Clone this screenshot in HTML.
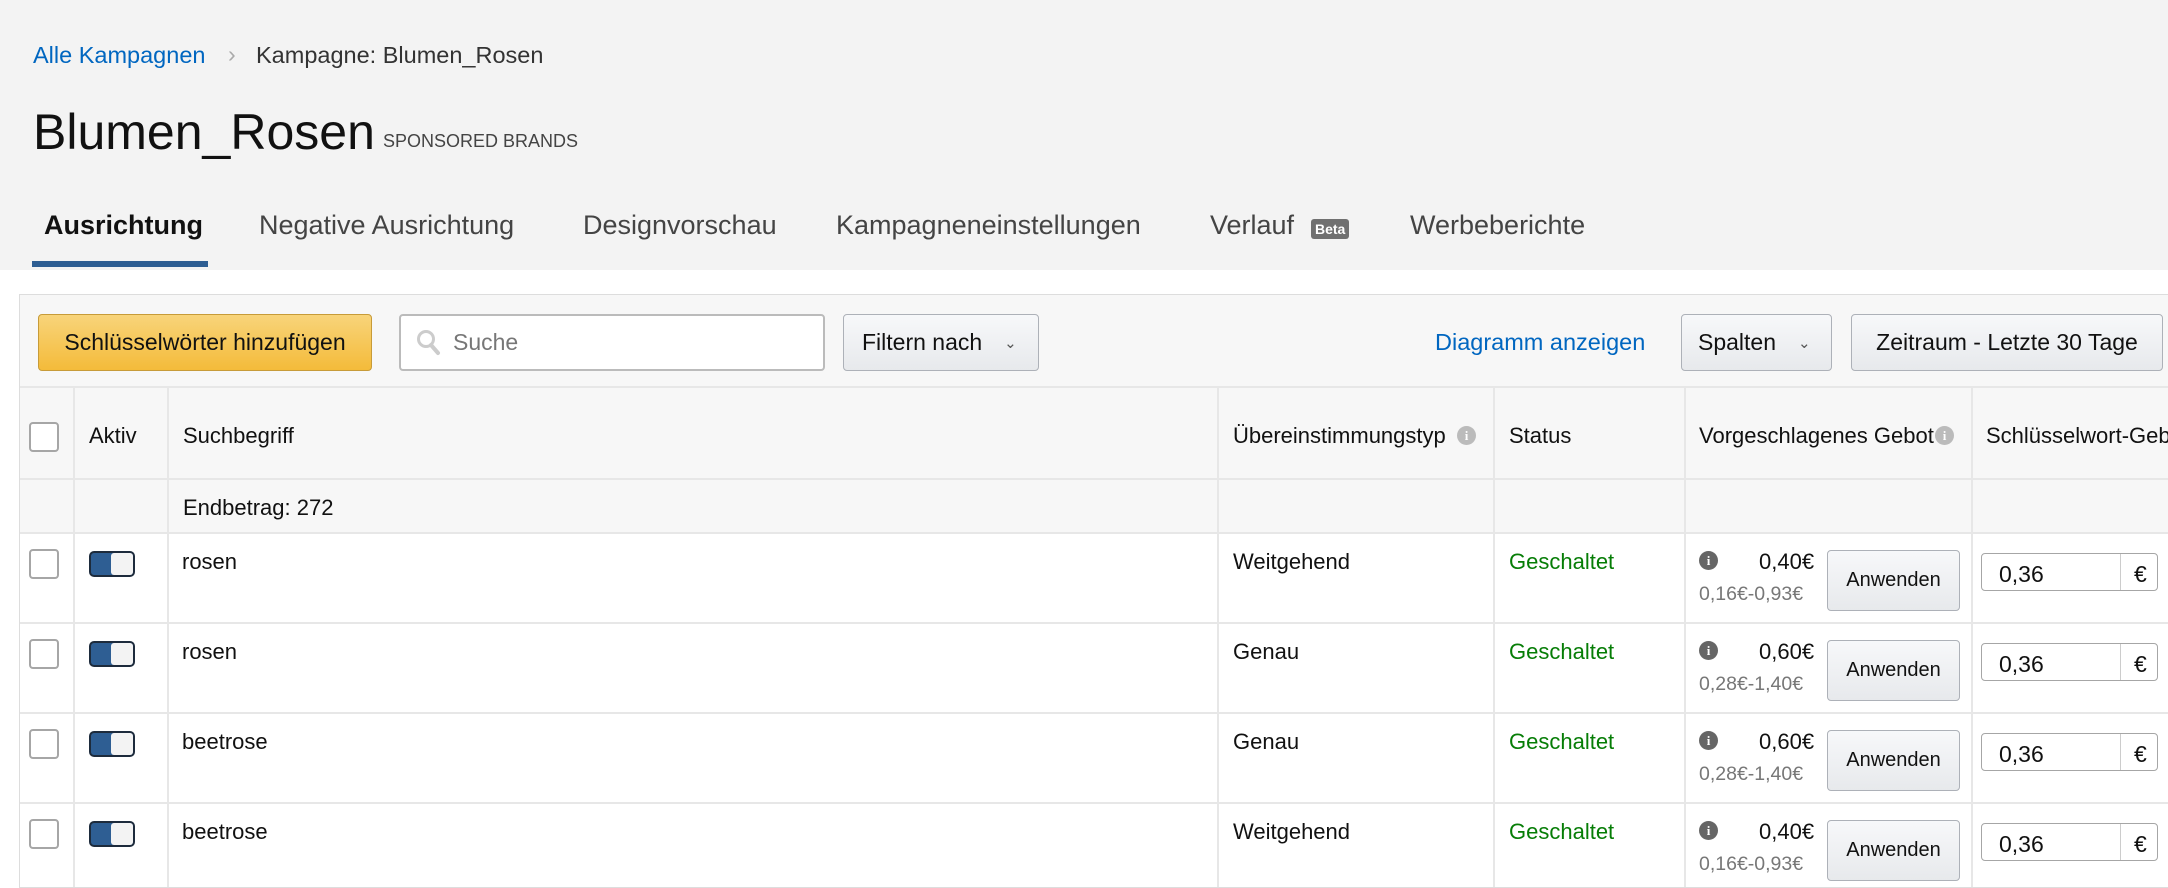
<!DOCTYPE html>
<html style="overflow:hidden;width:2168px;height:888px"><head><meta charset="utf-8"><style>
*{box-sizing:border-box;margin:0;padding:0}
body{width:2168px;height:888px;overflow:hidden;background:#fff;font-family:"Liberation Sans",Arial,sans-serif;color:#111;position:relative}
.top{position:absolute;left:0;top:0;width:2168px;height:270px;background:#f3f3f3}
.a{position:absolute;white-space:nowrap}
.panel{position:absolute;left:19px;top:294px;width:2160px;height:594px;border:1px solid #ddd;background:#fff;overflow:hidden}
.tb{position:absolute;left:0;top:0;width:100%;height:93px;background:#f7f7f7;border-bottom:2px solid #e7e7e7}
.btn{position:absolute;border:1px solid #adb1b8;border-radius:4px;background:linear-gradient(#f7f8fa,#e7e9ec);font-size:23px;display:flex;align-items:center;justify-content:center}
.hdr{position:absolute;left:0;top:93px;width:100%;height:144px;background:#f7f7f7}
.hl{position:absolute;height:2px;background:#e7e7e7;left:0;width:100%}
.vl{position:absolute;width:2px;background:#e7e7e7;top:93px;height:520px}
.cb{position:absolute;width:30px;height:30px;border:2px solid #a6a6a6;border-radius:4px;background:#fff}
.tg{position:absolute;width:46px;height:26px;border:2px solid #1d2b3c;border-radius:5px;background:#2e5e93}
.tg i{position:absolute;right:0;top:0;width:22px;height:22px;background:#f3f3f3;border-radius:3px}
.t{font-size:22px}
.g{color:#067d06}
.info{position:absolute;width:19px;height:19px;border-radius:50%;background:#666;color:#fff;font-size:13px;font-weight:bold;text-align:center;line-height:19px;font-family:"Liberation Serif",serif}
.inp{position:absolute;width:177px;height:38px;border:1px solid #a6a6a6;border-radius:4px;background:#fff;font-size:23px}
.tab{position:absolute;white-space:nowrap;top:210px;font-size:27px;color:#444}
</style></head><body>
<div class="top"></div>
<div class="a" style="left:33px;top:42px;font-size:23.5px;color:#0066c0">Alle Kampagnen</div>
<div class="a" style="left:228px;top:41px;font-size:23px;color:#aaa">›</div>
<div class="a" style="left:256px;top:42px;font-size:23.5px;color:#333">Kampagne: Blumen_Rosen</div>
<div class="a" style="left:33px;top:103px;font-size:50px;color:#111">Blumen_Rosen</div>
<div class="a" style="left:383px;top:131px;font-size:18px;color:#444">SPONSORED BRANDS</div>
<div class="tab" style="left:44px;font-weight:bold;color:#111">Ausrichtung</div>
<div class="a" style="left:32px;top:261px;width:176px;height:6px;background:#2e5e93"></div>
<div class="tab" style="left:259px">Negative Ausrichtung</div>
<div class="tab" style="left:583px">Designvorschau</div>
<div class="tab" style="left:836px">Kampagneneinstellungen</div>
<div class="tab" style="left:1210px">Verlauf</div>
<div class="a" style="left:1311px;top:219px;font-size:14px;font-weight:bold;color:#fff;background:#707070;border-radius:3px;padding:2px 4px">Beta</div>
<div class="tab" style="left:1410px">Werbeberichte</div>

<div class="panel">
<div class="tb"></div>
<div class="btn" style="left:18px;top:19px;width:334px;height:57px;background:linear-gradient(#f8d47a,#f4bb3a);border-color:#c79b39">Schlüsselwörter hinzufügen</div>
<div class="a" style="left:379px;top:19px;width:426px;height:57px;border:2px solid #bbb;border-radius:4px;background:#fff"></div>
<svg class="a" style="left:396px;top:34px" width="26" height="28" viewBox="0 0 26 28"><circle cx="10" cy="10" r="7.5" fill="none" stroke="#ccc" stroke-width="3"/><path d="M15 16 L22 24" stroke="#ccc" stroke-width="4" stroke-linecap="round"/></svg>
<div class="a" style="left:433px;top:34px;font-size:23px;color:#777">Suche</div>
<div class="btn" style="left:823px;top:19px;width:196px;height:57px;justify-content:flex-start;padding-left:18px">Filtern nach<span style="margin-left:22px;font-size:15px;color:#555">&#8964;</span></div>
<div class="a" style="left:1415px;top:34px;font-size:23.5px;color:#0066c0">Diagramm anzeigen</div>
<div class="btn" style="left:1661px;top:19px;width:151px;height:57px;justify-content:flex-start;padding-left:16px">Spalten<span style="margin-left:22px;font-size:15px;color:#555">&#8964;</span></div>
<div class="btn" style="left:1831px;top:19px;width:312px;height:57px">Zeitraum - Letzte 30 Tage</div>

<div class="hdr"></div>
<div class="hl" style="top:183px"></div>
<div class="hl" style="top:237px"></div>
<div class="hl" style="top:327px"></div>
<div class="hl" style="top:417px"></div>
<div class="hl" style="top:507px"></div>
<div class="vl" style="left:53px"></div>
<div class="vl" style="left:147px"></div>
<div class="vl" style="left:1197px"></div>
<div class="vl" style="left:1473px"></div>
<div class="vl" style="left:1664px"></div>
<div class="vl" style="left:1951px"></div>

<div class="cb" style="left:9px;top:127px"></div>
<div class="a t" style="left:69px;top:128px">Aktiv</div>
<div class="a t" style="left:163px;top:128px">Suchbegriff</div>
<div class="a t" style="left:1213px;top:128px">Übereinstimmungstyp</div>
<div class="info" style="left:1437px;top:131px;background:#bbb">i</div>
<div class="a t" style="left:1489px;top:128px">Status</div>
<div class="a t" style="left:1679px;top:128px">Vorgeschlagenes Gebot</div>
<div class="info" style="left:1915px;top:131px;background:#bbb">i</div>
<div class="a t" style="left:1966px;top:128px">Schlüsselwort-Gebot</div>
<div class="a t" style="left:163px;top:200px">Endbetrag: 272</div>

<div class="cb" style="left:9px;top:254px"></div><div class="tg" style="left:69px;top:256px"><i></i></div>
<div class="a t" style="left:162px;top:254px">rosen</div><div class="a t" style="left:1213px;top:254px">Weitgehend</div><div class="a t g" style="left:1489px;top:254px">Geschaltet</div>
<div class="info" style="left:1679px;top:256px">i</div><div class="a t" style="left:1739px;top:254px">0,40€</div><div class="a" style="left:1679px;top:288px;font-size:19.5px;color:#777">0,16€-0,93€</div>
<div class="btn" style="left:1807px;top:255px;width:133px;height:61px;font-size:20px">Anwenden</div>
<div class="inp" style="left:1961px;top:258px"><span style="position:absolute;left:17px;top:7px">0,36</span><span style="position:absolute;left:138px;top:0;width:1px;height:36px;background:#ccc"></span><span style="position:absolute;left:152px;top:7px">€</span></div>

<div class="cb" style="left:9px;top:344px"></div><div class="tg" style="left:69px;top:346px"><i></i></div>
<div class="a t" style="left:162px;top:344px">rosen</div><div class="a t" style="left:1213px;top:344px">Genau</div><div class="a t g" style="left:1489px;top:344px">Geschaltet</div>
<div class="info" style="left:1679px;top:346px">i</div><div class="a t" style="left:1739px;top:344px">0,60€</div><div class="a" style="left:1679px;top:378px;font-size:19.5px;color:#777">0,28€-1,40€</div>
<div class="btn" style="left:1807px;top:345px;width:133px;height:61px;font-size:20px">Anwenden</div>
<div class="inp" style="left:1961px;top:348px"><span style="position:absolute;left:17px;top:7px">0,36</span><span style="position:absolute;left:138px;top:0;width:1px;height:36px;background:#ccc"></span><span style="position:absolute;left:152px;top:7px">€</span></div>

<div class="cb" style="left:9px;top:434px"></div><div class="tg" style="left:69px;top:436px"><i></i></div>
<div class="a t" style="left:162px;top:434px">beetrose</div><div class="a t" style="left:1213px;top:434px">Genau</div><div class="a t g" style="left:1489px;top:434px">Geschaltet</div>
<div class="info" style="left:1679px;top:436px">i</div><div class="a t" style="left:1739px;top:434px">0,60€</div><div class="a" style="left:1679px;top:468px;font-size:19.5px;color:#777">0,28€-1,40€</div>
<div class="btn" style="left:1807px;top:435px;width:133px;height:61px;font-size:20px">Anwenden</div>
<div class="inp" style="left:1961px;top:438px"><span style="position:absolute;left:17px;top:7px">0,36</span><span style="position:absolute;left:138px;top:0;width:1px;height:36px;background:#ccc"></span><span style="position:absolute;left:152px;top:7px">€</span></div>

<div class="cb" style="left:9px;top:524px"></div><div class="tg" style="left:69px;top:526px"><i></i></div>
<div class="a t" style="left:162px;top:524px">beetrose</div><div class="a t" style="left:1213px;top:524px">Weitgehend</div><div class="a t g" style="left:1489px;top:524px">Geschaltet</div>
<div class="info" style="left:1679px;top:526px">i</div><div class="a t" style="left:1739px;top:524px">0,40€</div><div class="a" style="left:1679px;top:558px;font-size:19.5px;color:#777">0,16€-0,93€</div>
<div class="btn" style="left:1807px;top:525px;width:133px;height:61px;font-size:20px">Anwenden</div>
<div class="inp" style="left:1961px;top:528px"><span style="position:absolute;left:17px;top:7px">0,36</span><span style="position:absolute;left:138px;top:0;width:1px;height:36px;background:#ccc"></span><span style="position:absolute;left:152px;top:7px">€</span></div>
</div>
</body></html>
